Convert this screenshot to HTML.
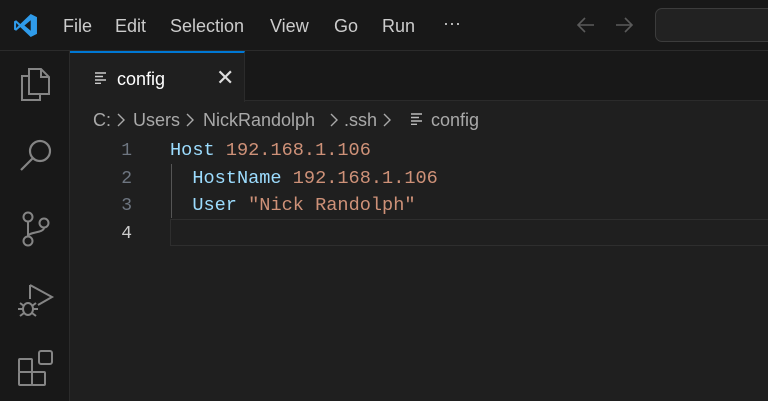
<!DOCTYPE html>
<html><head><meta charset="utf-8"><style>
*{margin:0;padding:0;box-sizing:border-box}
body{width:768px;height:401px;overflow:hidden;background:#1f1f1f;font-family:"Liberation Sans",sans-serif;position:relative;color:#ccc}
.title{position:absolute;left:0;top:0;width:768px;height:51px;background:#181818;border-bottom:1px solid #2b2b2b}
.menu{position:absolute;top:16px;font-size:18px;color:#cccccc}
.act{position:absolute;left:0;top:51px;width:70px;height:350px;background:#181818;border-right:1px solid #2b2b2b}
.tabbar{position:absolute;left:70px;top:51px;width:698px;height:50px;background:#181818;border-bottom:1px solid #2b2b2b}
.tab{position:absolute;left:0;top:0;width:175px;height:51px;background:#1f1f1f;border-top:2px solid #0078d4;border-right:1px solid #2b2b2b}
.bc{position:absolute;top:110px;font-size:18px;color:#a9a9a9;white-space:nowrap}
.chev{position:absolute;top:112px}
.code{position:absolute;font-family:"Liberation Mono",monospace;font-size:18.6px;white-space:pre}
.ln{position:absolute;left:100px;width:32px;text-align:right;font-family:"Liberation Mono",monospace;font-size:18px;color:#6e7681}
.k{color:#9cdcfe}.v{color:#ce9178}
</style></head><body>
<div class="title">
<svg style="position:absolute;left:13px;top:13px" width="25" height="25" viewBox="0 0 24 24"><path d="M17 1 L23 4 V20 L17 23 L7 13.5 L3 17 L1 16 V8 L3 7 L7 10.5 Z M17 7 L11 12 L17 17 Z M3 9.5 V14.5 L5.5 12 Z" fill="#2f9bea"/></svg>
<span class="menu" style="left:63px">File</span>
<span class="menu" style="left:115px">Edit</span>
<span class="menu" style="left:170px">Selection</span>
<span class="menu" style="left:270px">View</span>
<span class="menu" style="left:334px">Go</span>
<span class="menu" style="left:382px">Run</span>
<span class="menu" style="left:443px;top:13px">···</span>
<svg style="position:absolute;left:575px;top:15px" width="22" height="20" viewBox="0 0 22 20"><path d="M19 10H3M10 3L3 10L10 17" stroke="#5a5a5a" stroke-width="1.6" fill="none"/></svg>
<svg style="position:absolute;left:613px;top:15px" width="22" height="20" viewBox="0 0 22 20"><path d="M3 10H19M12 3L19 10L12 17" stroke="#5a5a5a" stroke-width="1.6" fill="none"/></svg>
<div style="position:absolute;left:655px;top:8px;width:130px;height:34px;border:1px solid #3c3c3c;border-radius:7px;background:#222"></div>
</div>
<div class="act">
<svg style="position:absolute;left:18px;top:16px" width="34" height="38" viewBox="0 0 34 38" fill="none" stroke="#858585" stroke-width="2"><path d="M11 9H4v24h18v-6"/><path d="M11 2h12l8 8v17H11z"/><path d="M23 2v8h8"/></svg>
<svg style="position:absolute;left:18px;top:86px" width="36" height="36" viewBox="0 0 36 36" fill="none" stroke="#858585" stroke-width="2.2"><circle cx="22" cy="14" r="10"/><path d="M15 21L3 33"/></svg>
<svg style="position:absolute;left:20px;top:158px" width="32" height="40" viewBox="0 0 32 40" fill="none" stroke="#858585" stroke-width="2"><circle cx="8" cy="8" r="4.5"/><circle cx="8" cy="32" r="4.5"/><circle cx="24" cy="14" r="4.5"/><path d="M8 12.5v15M24 18.5c0 6-16 4-16 9"/></svg>
<svg style="position:absolute;left:16px;top:228px" width="40" height="40" viewBox="0 0 40 40" fill="none" stroke="#858585" stroke-width="2"><path d="M14 6V20M14 6L36 18L22 26"/><ellipse cx="12" cy="30" rx="5" ry="6"/><path d="M2 30h5M17 30h5M4 24l4 3M20 24l-4 3M4 37l4-3M20 37l-4-3"/></svg>
<svg style="position:absolute;left:17px;top:298px" width="38" height="38" viewBox="0 0 38 38" fill="none" stroke="#858585" stroke-width="2"><rect x="2" y="10" width="13" height="13" rx="1"/><rect x="2" y="23" width="13" height="13" rx="1"/><rect x="15" y="23" width="13" height="13" rx="1"/><rect x="22" y="2" width="13" height="13" rx="2"/></svg>
</div>
<div class="tabbar"><div class="tab">
<svg style="position:absolute;left:25px;top:19px" width="14" height="12" viewBox="0 0 14 12" stroke="#ccc" stroke-width="1.4"><path d="M0 1h11M0 4.5h8M0 8h11M0 11.3h6"/></svg>
<span style="position:absolute;left:47px;top:16px;font-size:18px;color:#fff">config</span>
<span style="position:absolute;left:146px;top:12px;font-size:22px;color:#ddd">✕</span>
</div></div>
<span class="bc" style="left:93px">C:</span>
<svg class="chev" style="left:116px" width="10" height="16" viewBox="0 0 10 16"><path d="M2 2l6 6-6 6" stroke="#a9a9a9" stroke-width="1.4" fill="none"/></svg>
<span class="bc" style="left:133px">Users</span>
<svg class="chev" style="left:185px" width="10" height="16" viewBox="0 0 10 16"><path d="M2 2l6 6-6 6" stroke="#a9a9a9" stroke-width="1.4" fill="none"/></svg>
<span class="bc" style="left:203px">NickRandolph</span>
<svg class="chev" style="left:329px" width="10" height="16" viewBox="0 0 10 16"><path d="M2 2l6 6-6 6" stroke="#a9a9a9" stroke-width="1.4" fill="none"/></svg>
<span class="bc" style="left:344px">.ssh</span>
<svg class="chev" style="left:382px" width="10" height="16" viewBox="0 0 10 16"><path d="M2 2l6 6-6 6" stroke="#a9a9a9" stroke-width="1.4" fill="none"/></svg>
<svg style="position:absolute;left:411px;top:113px" width="13" height="12" viewBox="0 0 13 12" stroke="#bbb" stroke-width="1.4"><path d="M0 1h11M0 4.5h8M0 8h11M0 11.3h6"/></svg>
<span class="bc" style="left:431px">config</span>
<div class="ln" style="top:141px">1</div>
<div class="ln" style="top:169px">2</div>
<div class="ln" style="top:196px">3</div>
<div class="ln" style="top:224px;color:#ccc">4</div>
<div style="position:absolute;left:170px;top:219px;width:600px;height:27px;border:1px solid #2e2e2e;border-right:none"></div>
<div style="position:absolute;left:171px;top:164px;width:1px;height:54px;background:#555"></div>
<div class="code" style="left:170px;top:140px"><span class="k">Host</span> <span class="v">192.168.1.106</span></div>
<div class="code" style="left:170px;top:168px">  <span class="k">HostName</span> <span class="v">192.168.1.106</span></div>
<div class="code" style="left:170px;top:195px">  <span class="k">User</span> <span class="v">"Nick Randolph"</span></div>
</body></html>
